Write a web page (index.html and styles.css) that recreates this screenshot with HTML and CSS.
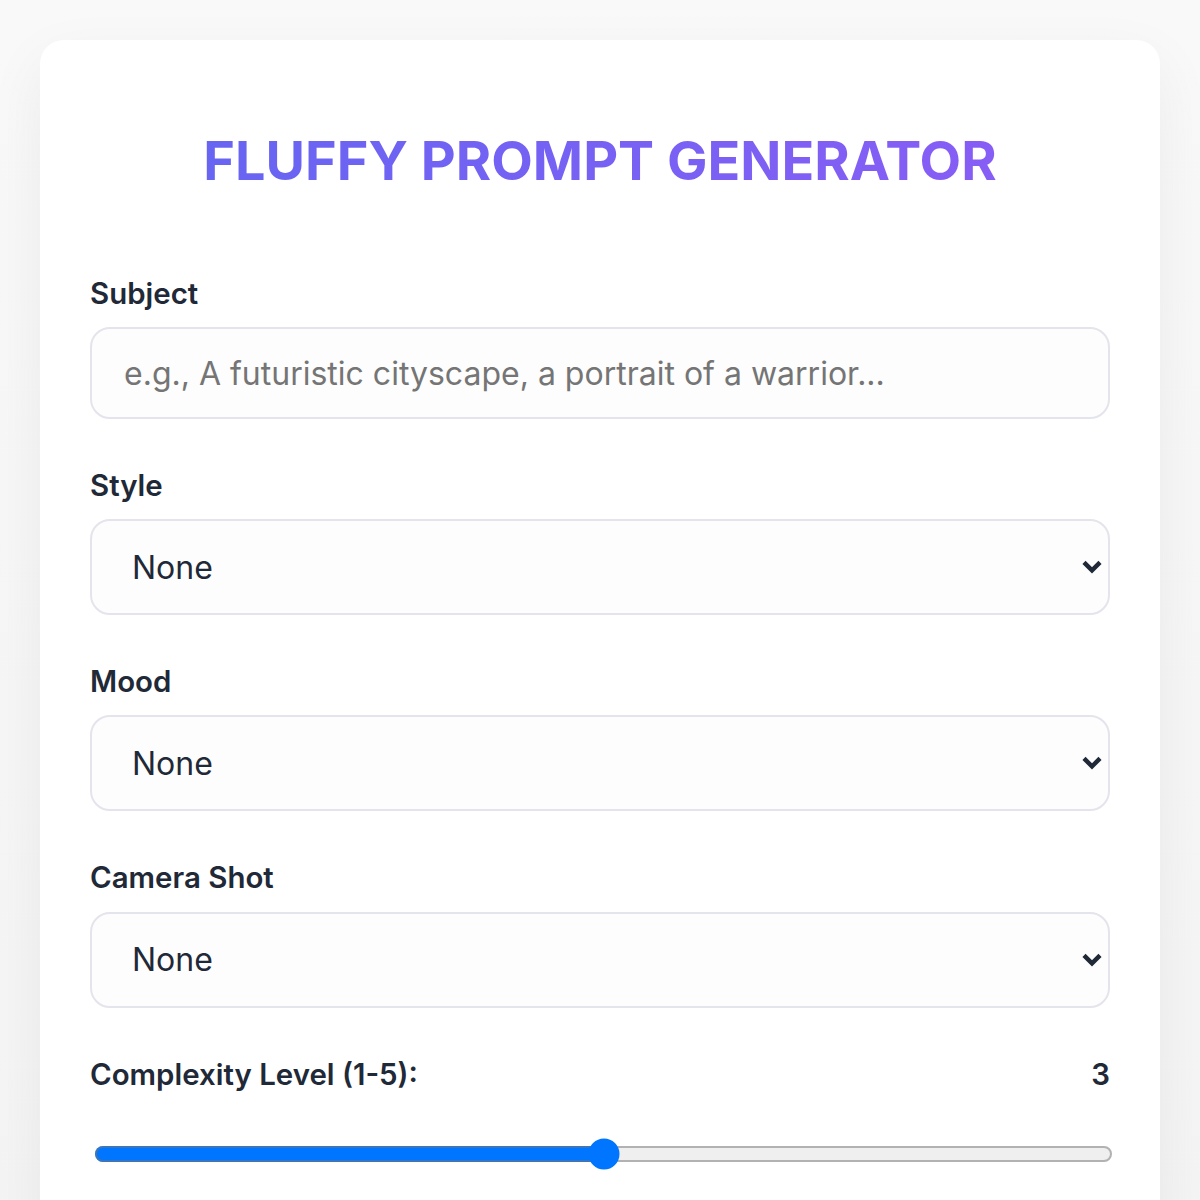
FILE: index.html
```html
<!DOCTYPE html>
<html lang="en">
<head>
    <meta charset="UTF-8">
    <meta name="viewport" content="width=device-width, initial-scale=1.0">
    <title>Fluffy Prompt Generator</title>
    <link rel="stylesheet" href="styles.css">
</head>
<body>
    <div class="container">
        <h1>FLUFFY PROMPT GENERATOR</h1>
        <form id="promptForm">
            <div class="form-group">
                <label for="subject">Subject</label>
                <input type="text" id="subject" name="subject" placeholder="e.g., A futuristic cityscape, a portrait of a warrior...">
            </div>
            <div class="form-group">
                <label for="style">Style</label>
                <div class="select-wrap">
                    <select id="style" name="style">
                        <option>None</option>
                        <option>Photorealistic</option>
                        <option>Anime</option>
                        <option>Oil Painting</option>
                    </select>
                    <svg class="chevron" viewBox="0 0 10 7"><polyline points="1,1.2 5,5.2 9,1.2"/></svg>
                </div>
            </div>
            <div class="form-group">
                <label for="mood">Mood</label>
                <div class="select-wrap">
                    <select id="mood" name="mood">
                        <option>None</option>
                        <option>Dreamy</option>
                        <option>Dark</option>
                        <option>Joyful</option>
                    </select>
                    <svg class="chevron" viewBox="0 0 10 7"><polyline points="1,1.2 5,5.2 9,1.2"/></svg>
                </div>
            </div>
            <div class="form-group">
                <label for="camera">Camera Shot</label>
                <div class="select-wrap">
                    <select id="camera" name="camera">
                        <option>None</option>
                        <option>Close-up</option>
                        <option>Wide Angle</option>
                        <option>Aerial View</option>
                    </select>
                    <svg class="chevron" viewBox="0 0 10 7"><polyline points="1,1.2 5,5.2 9,1.2"/></svg>
                </div>
            </div>
            <div class="form-group">
                <div class="range-header">
                    <label for="complexity">Complexity Level (1-5):</label>
                    <span id="complexityValue">3</span>
                </div>
                <input type="range" id="complexity" name="complexity" min="1" max="5" value="3">
            </div>
        </form>
    </div>

    <script>
        document.getElementById('complexity').addEventListener('input', function() {
            document.getElementById('complexityValue').textContent = this.value;
        });
    </script>
</body>
</html>
```

FILE: styles.css
```css
html {
    zoom: 2;
}
body {
    font-family: Inter, "Noto Sans", sans-serif;
    line-height: 1.5;
    margin: 0;
    padding: 20px;
    background: linear-gradient(180deg, #f9f9f9 0%, #efefef 100%);
    color: #1f2937;
    min-height: 100vh;
}
.container {
    background: #fff;
    padding: 40px 25px 25px;
    border-radius: 12px;
    box-shadow: 0 10px 30px rgba(0, 0, 0, 0.06);
}
h1 {
    margin: 0 0 35px;
    font-size: 27px;
    font-weight: 700;
    text-align: center;
    background: linear-gradient(90deg, #6366f1, #8b5cf6);
    -webkit-background-clip: text;
    background-clip: text;
    color: transparent;
}
.form-group {
    margin-bottom: 22px;
}
.form-group label {
    display: block;
    margin-bottom: 6px;
    font-size: 0.92rem;
    font-weight: 600;
}
.form-group input[type="text"], .form-group select {
    width: 100%;
    box-sizing: border-box;
    padding: 0 16px;
    border: 1px solid #e4e5ec;
    border-radius: 10px;
    background-color: #fdfdfd;
    font-family: inherit;
    font-size: 16px;
    color: #1f2937;
}
.form-group input[type="text"] {
    height: 46px;
}
.form-group select {
    height: 48px;
    padding-left: 20px;
    -webkit-appearance: none;
    appearance: none;
}
.select-wrap {
    position: relative;
}
.chevron {
    position: absolute;
    right: 4px;
    top: 50%;
    width: 10px;
    height: 7px;
    margin-top: -3.5px;
    fill: none;
    stroke: #1f2937;
    stroke-width: 2.2;
    pointer-events: none;
}
.range-header {
    display: flex;
    justify-content: space-between;
    align-items: center;
    font-size: 0.92rem;
    font-weight: 600;
}
.range-header label {
    margin-bottom: 0;
}
.form-group input[type="range"] {
    width: calc(100% - 0.5px);
    margin: 21px 0 0 2px;
}
```
